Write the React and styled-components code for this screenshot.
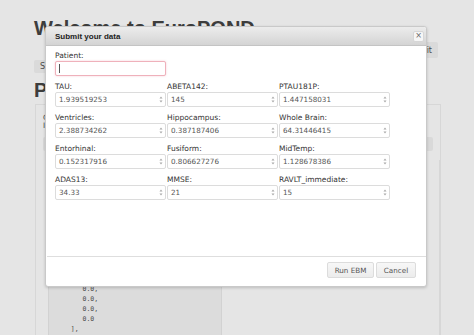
import React from "react";
import styled, { createGlobalStyle } from "styled-components";

const GlobalStyle = createGlobalStyle`
  html, body {
    margin: 0;
    padding: 0;
    background: #ffffff;
    font-family: "DejaVu Sans", Verdana, sans-serif;
  }
`;

const Page = styled.div`
  position: relative;
  width: 474px;
  height: 335px;
  overflow: hidden;
  box-sizing: border-box;
  padding: 16px 33px 0 34px;
`;

const Heading = styled.h1`
  margin: 0;
  font-family: "Liberation Sans", Arial, sans-serif;
  font-size: 20px;
  line-height: 24px;
  font-weight: bold;
  color: #444;
  white-space: nowrap;
`;

const Toolbar = styled.div`
  display: flex;
  justify-content: ${(p) => (p.$end ? "flex-end" : "flex-start")};
  margin-top: 2px;
  padding-right: ${(p) => (p.$end ? "3px" : "0")};
`;

const PageButton = styled.span`
  display: inline-flex;
  align-items: center;
  justify-content: center;
  height: ${(p) => p.$h}px;
  padding: 0 6px;
  background: #f3f3f3;
  border-radius: 2px;
  font-size: 8px;
  color: #555;
`;

const SubHeading = styled.h2`
  margin: 5px 0 0;
  font-family: "Liberation Sans", Arial, sans-serif;
  font-size: 20px;
  line-height: 24px;
  font-weight: bold;
  color: #444;
  white-space: nowrap;
`;

const Panel = styled.div`
  margin: 2px 0 0 1px;
  border: 1px solid #f0f0f0;
  border-bottom: none;
  padding: 9px 7px 0 7px;
  background: #ffffff;
`;

const PanelText = styled.div`
  font-size: 7.5px;
  line-height: 8px;
  color: #555;
  white-space: nowrap;
`;

const Bar = styled.div`
  margin-top: 7px;
  height: 14px;
  background: #f2f2f2;
  border-radius: 2px;
`;

const Columns = styled.div`
  display: grid;
  grid-template-columns: 174px 1fr;
  margin: 9px -7px 0 5px;
`;

const Pre = styled.pre`
  margin: 0;
  padding: 3px 0 0 10px;
  background: #f5f5f5;
  border: 1px solid #eaeaea;
  border-bottom: none;
  font-family: "DejaVu Sans Mono", monospace;
  font-size: 6.5px;
  line-height: 10px;
  color: #555;
  height: 200px;
`;

const RightPane = styled.div`
  border-right: 1px solid #f0f0f0;
`;

const Overlay = styled.div`
  position: absolute;
  inset: 0;
  background: rgba(0, 0, 0, 0.1);
`;

const Dialog = styled.div`
  position: absolute;
  left: 45px;
  top: 26px;
  width: 382px;
  height: 261px;
  box-sizing: border-box;
  background: #ffffff;
  border: 1px solid #c9c9c9;
  border-radius: 3px;
  box-shadow: 0 1px 3px rgba(0, 0, 0, 0.18);
  display: flex;
  flex-direction: column;
`;

const TitleBar = styled.div`
  height: 19px;
  box-sizing: border-box;
  display: flex;
  align-items: center;
  justify-content: space-between;
  padding: 0 2px 0 9px;
  background: linear-gradient(#ececec, #d4d4d4);
  border-bottom: 1px solid #c4c4c4;
  border-radius: 2px 2px 0 0;
`;

const Title = styled.span`
  font-family: "Liberation Sans", Arial, sans-serif;
  font-size: 8px;
  font-weight: bold;
  color: #222;
`;

const CloseButton = styled.span`
  width: 11px;
  height: 11px;
  box-sizing: border-box;
  display: flex;
  align-items: center;
  justify-content: center;
  background: #f6f6f6;
  border: 1px solid #d6d6d6;
  border-radius: 2px;
  font-size: 8px;
  line-height: 1;
  color: #666;
`;

const Body = styled.div`
  flex: 1;
  padding: 5px 0 0 9px;
`;

const Grid = styled.div`
  display: grid;
  grid-template-columns: repeat(3, 111px);
  column-gap: 1px;
`;

const Field = styled.div`
  margin-bottom: 6px;
`;

const Label = styled.div`
  font-size: 7.5px;
  line-height: 10px;
  color: #333;
  white-space: nowrap;
`;

const InputBox = styled.div`
  height: 15px;
  box-sizing: border-box;
  display: flex;
  align-items: center;
  padding: 0 2px 0 3px;
  border: 1px solid ${(p) => (p.$focus ? "#efb1bb" : "#dcdcdc")};
  border-radius: 2px;
  box-shadow: ${(p) => (p.$focus ? "0 0 2px rgba(236, 150, 165, 0.5)" : "none")};
  background: #fff;
`;

const Value = styled.span`
  flex: 1;
  font-size: 7.2px;
  color: #555;
  white-space: nowrap;
`;

const Caret = styled.span`
  width: 1px;
  height: 9px;
  background: #555;
`;

const Footer = styled.div`
  height: 30px;
  box-sizing: border-box;
  margin: 0 0 0 1px;
  border-top: 1px solid #dedede;
  display: flex;
  justify-content: flex-end;
  align-items: flex-start;
  gap: 2px;
  padding: 5px 10px 0 0;
`;

const FooterButton = styled.span`
  height: 16px;
  width: ${(p) => p.$w}px;
  box-sizing: border-box;
  display: flex;
  align-items: center;
  justify-content: center;
  background: linear-gradient(#f7f7f7, #ececec);
  border: 1px solid #dcdcdc;
  border-radius: 2px;
  font-size: 7.2px;
  color: #555;
`;

const Spin = () => (
  <svg width="4" height="7" viewBox="0 0 4 7">
    <path d="M2 0.5 L3.5 2.5 L0.5 2.5 Z" fill="#a8a8a8" />
    <path d="M2 6.5 L3.5 4.5 L0.5 4.5 Z" fill="#a8a8a8" />
  </svg>
);

const fields = [
  ["TAU:", "1.939519253"],
  ["ABETA142:", "145"],
  ["PTAU181P:", "1.447158031"],
  ["Ventricles:", "2.388734262"],
  ["Hippocampus:", "0.387187406"],
  ["Whole Brain:", "64.31446415"],
  ["Entorhinal:", "0.152317916"],
  ["Fusiform:", "0.806627276"],
  ["MidTemp:", "1.128678386"],
  ["ADAS13:", "34.33"],
  ["MMSE:", "21"],
  ["RAVLT_immediate:", "15"],
];

// lines above the visible tail sit behind the dialog
const code = [
  ...Array(12).fill(""),
  "      0.0,",
  "      0.0,",
  "      0.0,",
  "      0.0",
  "   ],",
].join("\n");

export default function App() {
  return (
    <>
      <GlobalStyle />
      <Page>
        <Heading>Welcome to EuroPOND</Heading>
        <Toolbar $end>
          <PageButton $h={16}>Submit</PageButton>
        </Toolbar>
        <Toolbar>
          <PageButton $h={13}>Select</PageButton>
        </Toolbar>
        <SubHeading>P</SubHeading>
        <Panel>
          <PanelText>C</PanelText>
          <PanelText>I</PanelText>
          <Bar />
          <Columns>
            <Pre>{code}</Pre>
            <RightPane />
          </Columns>
        </Panel>
        <Overlay />
        <Dialog>
          <TitleBar>
            <Title>Submit your data</Title>
            <CloseButton>×</CloseButton>
          </TitleBar>
          <Body>
            <Grid>
              <Field>
                <Label>Patient:</Label>
                <InputBox $focus>
                  <Caret />
                </InputBox>
              </Field>
            </Grid>
            <Grid>
              {fields.map(([label, value]) => (
                <Field key={label}>
                  <Label>{label}</Label>
                  <InputBox>
                    <Value>{value}</Value>
                    <Spin />
                  </InputBox>
                </Field>
              ))}
            </Grid>
          </Body>
          <Footer>
            <FooterButton $w={47}>Run EBM</FooterButton>
            <FooterButton $w={40}>Cancel</FooterButton>
          </Footer>
        </Dialog>
      </Page>
    </>
  );
}
